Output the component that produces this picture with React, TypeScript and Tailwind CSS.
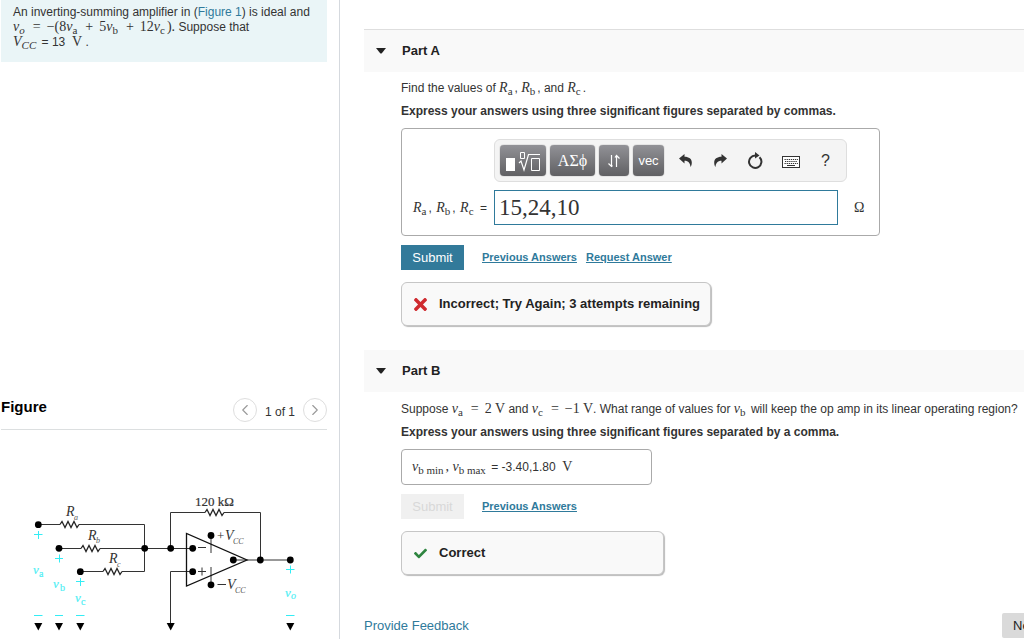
import type { ReactNode } from "react";
import { FaCheck, FaTimes } from "react-icons/fa";
import { ChevronLeft, ChevronRight } from "lucide-react";

const serif = "font-['Liberation_Serif',serif]";

function V({ name, sub, italicSub }: { name: string; sub?: string; italicSub?: boolean }) {
  return (
    <span className="font-['Liberation_Serif',serif] text-sm leading-none">
      <i>{name}</i>
      {sub && (
        <span className={italicSub ? "relative top-[3px] mr-[2px] text-[11px] italic" : "relative top-[3px] mr-[2px] text-[11px]"}>
          {sub}
        </span>
      )}
    </span>
  );
}

function M({ children }: { children: ReactNode }) {
  return <span className="font-['Liberation_Serif',serif] text-sm leading-none">{children}</span>;
}

function Op({ children }: { children: ReactNode }) {
  return <span className="mx-[6px] font-['Liberation_Serif',serif] text-sm leading-none">{children}</span>;
}

function PartHeader({ title }: { title: string }) {
  return (
    <h2 className="flex h-[42px] items-center bg-[#f9f9f9] text-[13px] font-bold text-[#222]">
      <button aria-label={`Collapse ${title}`} className="flex w-[38px] pl-3">
        <svg className="h-[6px] w-[10px]" viewBox="0 0 10 6">
          <path d="M0 0H10L6 5Q5 6 4 5Z" fill="#222" />
        </svg>
      </button>
      {title}
    </h2>
  );
}

function Status({ children, className }: { children: ReactNode; className: string }) {
  return (
    <div
      role="status"
      className={
        "flex h-[44px] max-w-full items-center rounded-md border border-[#c6c6c6] bg-[#f9f9f9] pl-3 text-[13px] font-bold text-[#222] shadow-[1px_1px_1px_#bbb] " +
        className
      }
    >
      {children}
    </div>
  );
}

const toolButton =
  "flex h-[31px] shrink-0 items-center justify-center rounded bg-linear-to-b from-[#929297] to-[#606063] text-white shadow-[0_0_1px_#555]";
const plainButton = "flex h-8 w-[35px] items-center justify-center text-[#333]";
const link = "text-[11px] font-bold text-[#2f7a9b] underline";

function Toolbar() {
  return (
    <div role="toolbar" className="flex h-[43px] w-[353px] max-w-full items-center gap-1 rounded-md border border-[#dedede] bg-[#f4f4f4] pl-[5px]">
      <button aria-label="Templates" className={toolButton + " w-[46px]"}>
        <svg className="h-6 w-9" viewBox="0 0 36 24" fill="none" stroke="white">
          <path d="M1 9H10V22H1Z" fill="white" stroke="none" />
          <path d="M15.5 3.5H19.5V9.500H15.5Z" />
          <path d="M14 14L16 12L19 21L23.500 5.500H35" strokeWidth="1.200" />
          <path d="M26.500 9.500H34.500V21.500H26.500Z" />
        </svg>
      </button>
      <button aria-label="Greek symbols" className={toolButton + " w-[45px] text-base " + serif}>
        ΑΣϕ
      </button>
      <button aria-label="Arrows" className={toolButton + " w-[30px]"}>
        <svg className="h-4 w-3" viewBox="0 0 12 16" fill="none" stroke="white" strokeWidth="1.200">
          <path d="M3.500 2V13.500M0.500 10.500L3.500 13.500L4.500 12.500M8.500 14V2.500M7 4.500L8.500 2.500L11.500 5.500" />
        </svg>
      </button>
      <button className={toolButton + " w-[31px] text-[13px]"}>vec</button>
      <div className="flex">
        <button aria-label="Undo" className={plainButton}>
          <svg className="size-[13px]" viewBox="0 0 13 13">
            <path d="M0 4.500L5.500 0V2.800C10 2.800 12.800 5 12.800 8.500C12.800 10.500 12.200 12 11.500 13C11.300 9.500 9.500 6.800 5.500 6.800V9.500Z" fill="#333" />
          </svg>
        </button>
        <button aria-label="Redo" className={plainButton}>
          <svg className="size-[13px]" viewBox="0 0 13 13">
            <path d="M13 4.500L7.500 0V2.800C3 2.800 0.200 5 0.200 8.500C0.200 10.500 0.800 12 1.500 13C1.700 9.500 3.500 6.800 7.500 6.800V9.500Z" fill="#333" />
          </svg>
        </button>
        <button aria-label="Reset" className={plainButton}>
          <svg className="h-[17px] w-[15px]" viewBox="0 0 15 17" fill="none">
            <path d="M11.500 5.200A6.200 6.200 0 1 1 7.500 3.500" stroke="#333" strokeWidth="2" />
            <path d="M7 0L11.500 3.500L7 6.500Z" fill="#333" />
          </svg>
        </button>
        <button aria-label="Keyboard" className={plainButton}>
          <svg className="mt-[2px] h-3 w-[18px]" viewBox="0 0 18 12">
            <rect x="0.500" y="0.500" width="17" height="11" fill="white" stroke="#333" />
            <path d="M2.500 3.500H16M3 5.500H15.500M2.500 7.500H16" stroke="#333" strokeWidth="1.200" strokeDasharray="1.300 0.800" />
            <path d="M5 9.500H13" stroke="#333" />
          </svg>
        </button>
        <button aria-label="Help" className={plainButton + " text-base"}>?</button>
      </div>
    </div>
  );
}

function Dot({ x, y }: { x: number; y: number }) {
  return <circle cx={x} cy={y} r="3.400" fill="#000" />;
}

function Circuit() {
  return (
    <svg
      role="img"
      aria-label="Inverting-summing amplifier circuit"
      className="mt-[55px] block h-[154px] w-[320px] font-['Liberation_Serif',serif]"
      viewBox="1 485 320 154"
    >
      <g fill="none" stroke="#333" strokeWidth="1">
        <path d="M38 524.500H60M79 524.500H144.500V571.500H122M103 571.500H80" />
        <path d="M59 548.500H81M100 548.500H193" />
        <path d="M170.500 548.500V512.500H205M224 512.500H260.500V559.500" />
        <path d="M193 571.500H170.500V624M233 560H290M211 535V553M211 567V585" />
        <path d="M186.500 533.500V586L247 560Z" strokeWidth="1.300" stroke="#111" />
        <path d="M198 547.500H206M198 571.500H206M202 567.500V575.500M217.500 584.500H226" />
      </g>
      <g fill="none" stroke="#222" strokeWidth="1.300">
        <path d="M60 524.500l2 -3l3 6l3 -6l3 6l3 -6l3 6l2 -3" />
        <path d="M81 548.500l2 -3l3 6l3 -6l3 6l3 -6l3 6l2 -3" />
        <path d="M103 571.500l2 -3l3 6l3 -6l3 6l3 -6l3 6l2 -3" />
        <path d="M205 512.500l2 -3l3 6l3 -6l3 6l3 -6l3 6l2 -3" />
      </g>
      <g fill="#000">
        {[38.3, 59, 80.3, 170.7, 290.3].map((x) => (
          <path key={x} d={`M${x - 4} 623H${x + 4}L${x} 630.500Z`} />
        ))}
      </g>
      <Dot x={38.3} y={524.7} />
      <Dot x={59} y={548.3} />
      <Dot x={80.3} y={571.7} />
      <Dot x={144.7} y={548.3} />
      <Dot x={170.7} y={548.3} />
      <Dot x={192.7} y={548.3} />
      <Dot x={192.7} y={571.7} />
      <Dot x={211} y={535.5} />
      <Dot x={211} y={584.8} />
      <Dot x={233.3} y={560} />
      <Dot x={260.3} y={560} />
      <Dot x={290.3} y={560} />
      <g fill="#333" fontSize="14">
        <text x="195" y="506" fontSize="13" stroke="#333" strokeWidth="0.200">120 kΩ</text>
        <g fontStyle="italic">
          <text x="66" y="516">R</text>
          <text x="88" y="540">R</text>
          <text x="109" y="563">R</text>
          <text x="225" y="540">V</text>
          <text x="227" y="589">V</text>
          <g fontSize="8" fill="#555">
            <text x="74" y="520">a</text>
            <text x="96" y="543">b</text>
            <text x="117" y="567">c</text>
            <text x="233" y="544">CC</text>
            <text x="235" y="593">CC</text>
          </g>
        </g>
        <text x="217" y="540" fontSize="13">+</text>
      </g>
      <g stroke="#33edf5" strokeWidth="1">
        <path d="M34 534.500H42.500M38.500 531V539M55 558.500H63M59.500 554.500V562.500M76 581.500H84.500M80.500 578V586M286 569.500H294.500M290.500 565.500V573.500" />
        <path d="M34 615.500H42.500M55 615.500H63M76 615.500H84.500M286 615.500H294.500" />
      </g>
      <g fill="#4feff5" stroke="#4feff5" strokeWidth="0.200" fontSize="13">
        <text x="33" y="574" fontStyle="italic">v</text>
        <text x="39" y="577" fontSize="10">a</text>
        <text x="53" y="588" fontStyle="italic">v</text>
        <text x="60" y="591" fontSize="10">b</text>
        <text x="75" y="602" fontStyle="italic">v</text>
        <text x="81" y="605" fontSize="10">c</text>
        <text x="285" y="597" fontStyle="italic">v</text>
        <text x="291" y="599" fontStyle="italic" fontSize="10">o</text>
      </g>
    </svg>
  );
}

export default function App() {
  return (
    <div className="flex min-h-screen overflow-hidden bg-white font-['Liberation_Sans',Arial,sans-serif] text-xs text-[#333]">
      <aside className="flex w-[340px] shrink-0 flex-col border-r border-[#d5d9de] pl-px">
        <p className="mr-3 h-[62px] bg-[#eaf5f7] pl-3 pt-[5px] text-xs leading-[15px]">
          An inverting-summing amplifier in (
          <a href="#figure" className="text-[#2f7a9b]">Figure 1</a>) is ideal and
          <br />
          <V name="v" sub="o" italicSub />
          <Op>=</Op>
          <M>−(8</M>
          <V name="v" sub="a" />
          <Op>+</Op>
          <M>5</M>
          <V name="v" sub="b" />
          <Op>+</Op>
          <M>12</M>
          <V name="v" sub="c" />
          <M>).</M> Suppose that
          <br />
          <V name="V" sub="CC" italicSub /> = 13 &nbsp;<M>V</M> .
        </p>
        <section id="figure" className="mt-[332px] mr-3">
          <header className="flex h-9 items-start justify-between border-b border-[#dcdfe0]">
            <h2 className="pt-[3px] text-[15px] leading-5 font-bold text-black">Figure</h2>
            <div className="flex items-center gap-2 pt-1 text-xs">
              <button aria-label="Previous figure" className="flex size-6 items-center justify-center rounded-full border border-[#dedede] text-[#999]">
                <ChevronLeft size={18} strokeWidth={1.5} />
              </button>
              <span className="pt-1">1 of 1</span>
              <button aria-label="Next figure" className="flex size-6 items-center justify-center rounded-full border border-[#dedede] text-[#999]">
                <ChevronRight size={18} strokeWidth={1.5} />
              </button>
            </div>
          </header>
          <Circuit />
        </section>
      </aside>

      <main className="min-w-0 flex-1 pl-6 pt-[29px]">
        <section>
          <div className="border-t border-[#dedede]">
            <PartHeader title="Part A" />
          </div>
          <div className="pl-[37px] pt-2">
            <p className="leading-4">
              Find the values of <V name="R" sub="a" />, <V name="R" sub="b" />, and <V name="R" sub="c" />.
            </p>
            <p className="mt-[7px] leading-4 font-bold">
              Express your answers using three significant figures separated by commas.
            </p>
            <div className="mt-[9px] h-[108px] w-[479px] max-w-full rounded border border-[#aaa] pt-[10px] pl-[11px]">
              <div className="pl-[81px]">
                <Toolbar />
              </div>
              <div className="mt-2 flex items-center">
                <label htmlFor="resistances" className="mr-[7px] flex w-[74px] items-baseline justify-between">
                  <span><V name="R" sub="a" />,</span>
                  <span><V name="R" sub="b" />,</span>
                  <V name="R" sub="c" />
                  <span>=</span>
                </label>
                <input
                  id="resistances"
                  defaultValue="15,24,10"
                  className="h-[35px] w-[344px] border border-[#2f7a9b] bg-white px-1 font-['Liberation_Serif',serif] text-[23px] text-[#333] outline-none"
                />
                <span className="pl-4 font-['Liberation_Serif',serif] text-sm">Ω</span>
              </div>
            </div>
            <div className="mt-[9px] flex items-center">
              <button className="h-[25px] w-[63px] bg-[#327a9a] text-[13px] text-white">Submit</button>
              <a href="#previous-a" className={link + " ml-[18px]"}>Previous Answers</a>
              <a href="#request" className={link + " ml-[9px]"}>Request Answer</a>
            </div>
            <Status className="mt-3 w-[310px]">
              <FaTimes className="mr-3 h-[19px] w-[13px] text-[#cf2a2f]" />
              Incorrect; Try Again; 3 attempts remaining
            </Status>
          </div>
        </section>

        <section className="mt-6">
          <PartHeader title="Part B" />
          <div className="pl-[37px] pt-[9px]">
            <p className="leading-4">
              Suppose <V name="v" sub="a" />
              <Op>=</Op>
              <M>2 V</M> and <V name="v" sub="c" />
              <Op>=</Op>
              <M>−1 V</M>. What range of values for{" "}
              <V name="v" sub="b" /> will keep the op amp in its linear operating region?
            </p>
            <p className="mt-[7px] leading-4 font-bold">
              Express your answers using three significant figures separated by a comma.
            </p>
            <div className="mt-[9px] flex h-9 w-[251px] items-center rounded border border-[#aaa] pl-[10px]">
              <span>
                <V name="v" sub="b min" />
                <M>,</M> <V name="v" sub="b max" /> = -3.40,1.80 &nbsp;<M>V</M>
              </span>
            </div>
            <div className="mt-[9px] flex items-center">
              <button disabled className="h-[25px] w-[63px] bg-[#f0f0f0] text-[13px] text-[#d8d8d8]">Submit</button>
              <a href="#previous-b" className={link + " ml-[18px]"}>Previous Answers</a>
            </div>
            <Status className="mt-3 w-[263px]">
              <FaCheck className="mr-3 size-[13px] text-[#2f8540]" />
              Correct
            </Status>
          </div>
        </section>

        <footer className="mt-[38px] -mr-8 flex items-center justify-between">
          <a href="#feedback" className="text-[13px] text-[#2f7a9b]">Provide Feedback</a>
          <button className="h-[25px] w-[54px] rounded-xs bg-[#dadada] pl-[11px] text-left text-[13px] text-[#222]">Next</button>
        </footer>
      </main>
    </div>
  );
}
